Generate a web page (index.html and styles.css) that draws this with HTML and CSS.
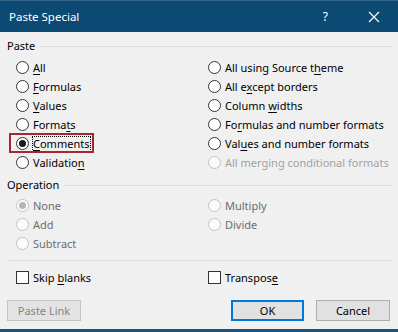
FILE: index.html
```html
<!DOCTYPE html>
<html lang="en">
<head>
    <meta charset="UTF-8">
    <title>Paste Special</title>
    <link rel="stylesheet" href="styles.css">
</head>
<body>
    <div class="dialog">
        <div class="titlebar">
            <span class="title">Paste Special</span>
            <span class="help">?</span>
            <svg class="close" width="12" height="12" viewBox="0 0 12 12">
                <path d="M1 1 L11 11 M11 1 L1 11" stroke="#fff" stroke-width="1.2" fill="none"/>
            </svg>
        </div>

        <div class="content">
            <!-- Paste group -->
            <div class="group-head first"><span>Paste</span></div>
            <div class="options">
                <div class="opt"><span class="radio"></span><span><u>A</u>ll</span></div>
                <div class="opt"><span class="radio"></span><span>All using Source t<u>h</u>eme</span></div>
                <div class="opt"><span class="radio"></span><span><u>F</u>ormulas</span></div>
                <div class="opt"><span class="radio"></span><span>All e<u>x</u>cept borders</span></div>
                <div class="opt"><span class="radio"></span><span><u>V</u>alues</span></div>
                <div class="opt"><span class="radio"></span><span>Column <u>w</u>idths</span></div>
                <div class="opt"><span class="radio"></span><span>Forma<u>t</u>s</span></div>
                <div class="opt"><span class="radio"></span><span>Fo<u>r</u>mulas and number formats</span></div>
                <div class="opt">
                    <span class="mark"></span>
                    <span class="radio checked"></span><span class="focus"><u>C</u>omments</span>
                </div>
                <div class="opt"><span class="radio"></span><span>Val<u>u</u>es and number formats</span></div>
                <div class="opt"><span class="radio"></span><span>Validatio<u>n</u></span></div>
                <div class="opt faint"><span class="radio off"></span><span>All merging conditional formats</span></div>
            </div>

            <!-- Operation group -->
            <div class="group-head second"><span>Operation</span></div>
            <div class="options ops">
                <div class="opt dim"><span class="radio off checked-off"></span><span>None</span></div>
                <div class="opt dim"><span class="radio off"></span><span>Multiply</span></div>
                <div class="opt dim"><span class="radio off"></span><span>Add</span></div>
                <div class="opt dim"><span class="radio off"></span><span>Divide</span></div>
                <div class="opt dim"><span class="radio off"></span><span>Subtract</span></div>
            </div>

            <div class="separator"></div>

            <div class="options checks">
                <div class="opt"><span class="checkbox"></span><span>Skip <u>b</u>lanks</span></div>
                <div class="opt"><span class="checkbox"></span><span>Transpos<u>e</u></span></div>
            </div>

            <div class="buttons">
                <button class="btn disabled">Paste Link</button>
                <span class="spacer"></span>
                <button class="btn default">OK</button>
                <button class="btn">Cancel</button>
            </div>
        </div>
    </div>
</body>
</html>
```

FILE: styles.css
```css
body {
    margin: 0;
    padding: 0;
    background: #f0f0f0;
    font-family: "Noto Sans", "Open Sans", sans-serif;
    font-size: 11px;
    color: #000;
}

.dialog {
    width: 398px;
    height: 332px;
    box-sizing: border-box;
    border-bottom: 3px solid #1a5480;
    display: flex;
    flex-direction: column;
}

.titlebar {
    height: 32px;
    box-sizing: border-box;
    border-top: 1px solid #35668c;
    background: #0c4a73;
    color: #fff;
    display: flex;
    align-items: center;
    padding-left: 9px;
}

.title {
    font-size: 11.5px;
    flex: 1;
}

.help {
    font-size: 12px;
    margin-right: 40px;
}

.close {
    margin-right: 18px;
}

.content {
    padding: 0 6px 0 7px;
}

.group-head {
    display: flex;
    align-items: center;
    height: 16px;
    line-height: 16px;
}

.group-head::after {
    content: "";
    flex: 1;
    height: 1px;
    background: #dcdcdc;
    margin-left: 6px;
}

.group-head.first {
    margin-top: 6px;
}

.group-head.second {
    margin-top: 5px;
}

.options {
    display: grid;
    grid-template-columns: 192px 1fr;
    grid-auto-rows: 19px;
    padding-left: 9px;
    margin-top: 4px;
}

.options.ops {
    margin-top: 3px;
}

.options.checks {
    margin-top: 7px;
}

.opt {
    display: flex;
    align-items: center;
    white-space: nowrap;
    position: relative;
}

.opt u {
    text-decoration-thickness: 1px;
    text-underline-offset: 2px;
}

.radio {
    width: 13px;
    height: 13px;
    box-sizing: border-box;
    border: 1px solid #333;
    border-radius: 50%;
    background: #fff;
    margin-right: 4px;
    flex-shrink: 0;
    display: flex;
    align-items: center;
    justify-content: center;
}

.radio.checked::after {
    content: "";
    width: 7px;
    height: 7px;
    border-radius: 50%;
    background: #1a1a1a;
}

.radio.off {
    border-color: #c2c2c2;
    background: #fbfbfb;
}

.radio.checked-off::after {
    content: "";
    width: 7px;
    height: 7px;
    border-radius: 50%;
    background: #b5b5b5;
}

.faint {
    color: #a2a2a2;
}

.dim {
    color: #6d6d6d;
}

.mark {
    position: absolute;
    left: -7px;
    top: -1px;
    width: 85px;
    height: 20px;
    box-sizing: border-box;
    border: 2px solid #a5282d;
}

.focus {
    border: 1px dotted #000;
    margin-left: -1px;
    padding: 0 1px 0 0;
    line-height: 14px;
}

.checkbox {
    width: 13px;
    height: 13px;
    box-sizing: border-box;
    border: 1px solid #333;
    background: #fff;
    margin-right: 4px;
    flex-shrink: 0;
}

.separator {
    height: 1px;
    background: #dcdcdc;
    margin-top: 7px;
}

.buttons {
    display: flex;
    margin-top: 13px;
}

.spacer {
    flex: 1;
}

.btn {
    width: 74px;
    height: 21px;
    box-sizing: border-box;
    background: #e1e1e1;
    border: 1px solid #adadad;
    font-family: inherit;
    font-size: 11px;
    padding: 0;
    color: #000;
}

.btn.default {
    width: 73px;
    border: 2px solid #0078d7;
    margin-right: 12px;
}

.btn.disabled {
    background: #e3e3e3;
    border-color: #c4c4c4;
    color: #838383;
}

.btn:last-child {
    margin-right: 2px;
}
```
